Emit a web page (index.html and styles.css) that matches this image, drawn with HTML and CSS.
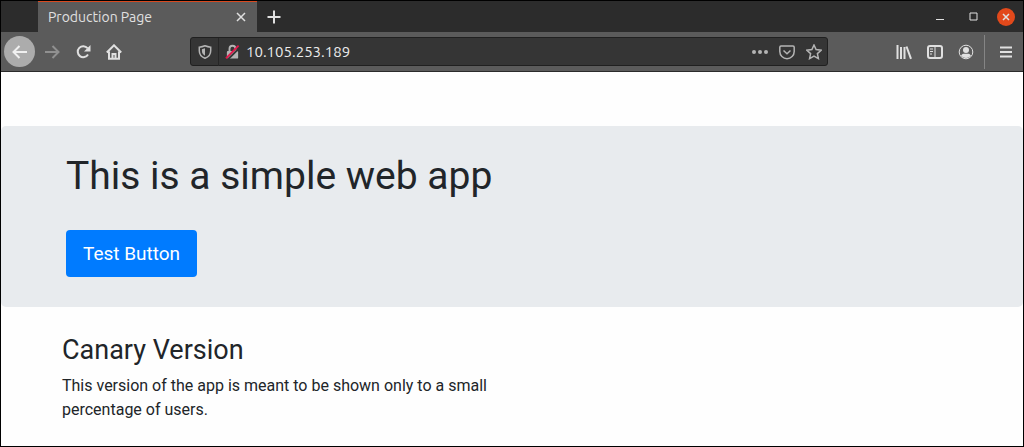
FILE: index.html
```html
<!DOCTYPE html>
<html lang="en">
<head>
  <meta charset="UTF-8">
  <meta name="viewport" content="width=device-width, initial-scale=1.0">
  <title>Production Page</title>
  <link rel="stylesheet" href="styles.css">
</head>
<body>

<div class="browser">
  <header>
    <div class="titlebar">
      <div class="tab">
        <span class="tab-title">Production Page</span>
        <button class="tab-close" aria-label="Close tab">
          <svg width="10" height="10" viewBox="0 0 10 10"><path d="M1 1l8 8M9 1l-8 8"/></svg>
        </button>
      </div>
      <button class="new-tab" aria-label="New tab">
        <svg width="14" height="14" viewBox="0 0 14 14"><path d="M7 0.500v13M0.500 7h13"/></svg>
      </button>
      <div class="window-controls">
        <button aria-label="Minimize">
          <svg width="8" height="8" viewBox="0 0 8 8"><path d="M0 6.500h8"/></svg>
        </button>
        <button aria-label="Maximize">
          <svg width="9" height="9" viewBox="0 0 9 9"><path d="M1 1h7v7H1z"/></svg>
        </button>
        <button class="window-close" aria-label="Close window">
          <svg width="8" height="8" viewBox="0 0 8 8"><path d="M1 1l6 6M7 1l-6 6"/></svg>
        </button>
      </div>
    </div>

    <div class="toolbar">
      <nav class="nav-buttons">
        <button class="back" aria-label="Back">
          <svg width="16" height="16" viewBox="0 0 16 16"><path d="M15 8H1.500M7.500 2l-6 6 6 6"/></svg>
        </button>
        <button class="forward" aria-label="Forward" disabled>
          <svg width="16" height="16" viewBox="0 0 16 16"><path d="M1 8h13.500M8.500 2l6 6-6 6"/></svg>
        </button>
        <button aria-label="Reload">
          <svg width="16" height="16" viewBox="0 0 16 16"><path d="M12.500 4.200A5.500 5.500 0 1 0 13 10.500"/><path class="solid" d="M15.500 1v6.500H9z"/></svg>
        </button>
        <button aria-label="Home">
          <svg width="16" height="16" viewBox="0 0 16 16"><path d="M0.800 8.500L8 1.300l7.200 7.200M3 7.500v7.300h10V7.500"/><path d="M6.500 15v-5h3v5"/></svg>
        </button>
      </nav>

      <form class="urlbar">
        <svg class="shield" width="14" height="14" viewBox="0 0 14 14"><path d="M7 0.800C5 1.600 3.200 2 1.300 2.200v3.600c0 3.700 2.200 6.200 5.700 7.500 3.500-1.300 5.700-3.800 5.700-7.500V2.200C10.800 2 9 1.600 7 0.800z"/><path class="solid" d="M7 3.300C6 3.800 5 4.100 3.900 4.300v1.800c0 2.200 1.100 3.700 3.100 4.600z"/></svg>
        <svg class="lock" width="16" height="16" viewBox="0 0 16 16"><path d="M4.800 7V4.500a3.200 3.200 0 0 1 6.400 0V7"/><rect class="solid" x="2" y="7" width="12" height="8" rx="1"/><path class="gap" d="M3 16L16 3"/><path class="slash" d="M1 14.800L14.500 1.200"/></svg>
        <input type="text" aria-label="Address" value="10.105.253.189">
        <button type="button" aria-label="Page actions">
          <svg width="16" height="16" viewBox="0 0 16 16"><circle class="solid" cx="2" cy="8" r="2"/><circle class="solid" cx="8" cy="8" r="2"/><circle class="solid" cx="14" cy="8" r="2"/></svg>
        </button>
        <button type="button" aria-label="Save to Pocket">
          <svg width="16" height="16" viewBox="0 0 16 16"><path d="M2 2h12a1.200 1.200 0 0 1 1.200 1.200V7.500a7.200 7.200 0 0 1-14.400 0V3.200A1.200 1.200 0 0 1 2 2z"/><path d="M4.500 6.500L8 9.800l3.500-3.300"/></svg>
        </button>
        <button type="button" aria-label="Bookmark this page">
          <svg width="16" height="16" viewBox="0 0 16 16"><path d="M8 1l2.100 4.600 5 0.600-3.700 3.400 1 5L8 12.100l-4.400 2.500 1-5L0.900 6.200l5-0.600z"/></svg>
        </button>
      </form>

      <div class="tools">
        <button aria-label="Library">
          <svg width="16" height="16" viewBox="0 0 16 16"><path d="M1.500 1v14M5 3v12M8.500 3v12M10.500 2.500L15 14.800"/></svg>
        </button>
        <button aria-label="Sidebars">
          <svg width="16" height="16" viewBox="0 0 16 16"><rect x="1" y="2" width="14" height="12" rx="2"/><path class="thin" d="M8 2v12M3 5h3M3 7.500h3M3 10h2"/></svg>
        </button>
        <button aria-label="Account">
          <svg width="16" height="16" viewBox="0 0 16 16"><circle class="thin" cx="8" cy="8" r="6.800"/><circle class="solid" cx="8" cy="6" r="3"/><path class="solid" d="M3 11.500c1-1.500 2.200-1.800 3-1.800h4c0.800 0 2 0.300 3 1.800-1.200 1.700-3 2.500-5 2.500s-3.800-0.800-5-2.500z"/></svg>
        </button>
        <button class="menu" aria-label="Open menu">
          <svg width="14" height="14" viewBox="0 0 14 14"><path d="M1 2.500h12M1 7h12M1 11.500h12"/></svg>
        </button>
      </div>
    </div>
  </header>

  <main>
    <section class="jumbotron">
      <h1>This is a simple web app</h1>
      <button class="btn">Test Button</button>
    </section>

    <section class="version">
      <h2>Canary Version</h2>
      <p>This version of the app is meant to be shown only to a small percentage of users.</p>
    </section>
  </main>
</div>

</body>
</html>
```
FILE: styles.css
```css
* {
  box-sizing: border-box;
}
body {
  margin: 0;
  background: #fefefe;
  color: #212529;
  font-family: Roboto, sans-serif;
  font-size: 16px;
  line-height: 24px;
}
.browser {
  min-height: 100vh;
  border: 1px solid #000;
}
header {
  font-family: Ubuntu, "Noto Sans", sans-serif;
  font-size: 14px;
  color: #e0e0e0;
}
header button {
  display: flex;
  align-items: center;
  justify-content: center;
  padding: 0;
  border: none;
  background: none;
  color: inherit;
}
header svg {
  display: block;
  flex: none;
  fill: none;
  stroke: currentColor;
  stroke-width: 2;
}
header svg .solid {
  fill: currentColor;
  stroke: none;
}
header svg .thin {
  stroke-width: 1;
}

/* title bar */
.titlebar {
  display: flex;
  height: 31px;
  padding-left: 37px;
  background: #2c2c2c;
}
.tab {
  display: flex;
  align-items: center;
  justify-content: space-between;
  width: 219px;
  padding: 0 11px 0 10px;
  border-top: 1px solid #d9491f;
  background: #5b5b5b;
}
.tab-close svg {
  stroke-width: 1.5;
}
.new-tab {
  width: 34px;
}
.window-controls {
  display: flex;
  align-items: center;
  gap: 15px;
  margin-left: auto;
  padding-right: 8px;
}
.window-controls button {
  width: 18px;
  height: 18px;
}
.window-controls svg {
  stroke-width: 1;
}
.window-controls .window-close {
  border-radius: 50%;
  background: #e2491b;
}
.window-close svg {
  stroke-width: 1.5;
}

/* toolbar */
.toolbar {
  display: flex;
  align-items: center;
  height: 40px;
  padding-left: 3px;
  border-bottom: 1px solid #2b2b2b;
  background: #5b5b5b;
}
.nav-buttons {
  display: flex;
  align-items: center;
}
.nav-buttons button {
  width: 31px;
  height: 31px;
}
.nav-buttons .back {
  margin-right: 1px;
  border-radius: 50%;
  background: #acacac;
  color: #f0f0f0;
}
.nav-buttons .forward {
  color: #909090;
}
.urlbar {
  display: flex;
  align-items: center;
  flex: 1;
  height: 29px;
  margin: 0 60px 0 61px;
  padding-left: 7px;
  border: 1px solid #202020;
  border-radius: 3px;
  background: #353535;
  color: #b4b4b4;
}
.urlbar .shield {
  stroke-width: 1.5;
}
.urlbar .lock {
  width: 28px;
  height: 28px;
  margin-left: 6px;
  padding: 6px;
  border-left: 1px solid #262626;
}
.lock .gap {
  stroke: #353535;
}
.lock .slash {
  stroke: #e3164a;
}
.urlbar input {
  flex: 1;
  min-width: 0;
  padding: 0;
  border: none;
  background: none;
  color: #ececec;
  font: inherit;
  font-size: 15px;
}
.urlbar button {
  width: 27px;
  height: 27px;
}
.urlbar button svg {
  stroke-width: 1.5;
}
.tools {
  display: flex;
  align-items: center;
}
.tools button {
  width: 31px;
  height: 34px;
}
.tools .menu {
  width: 39px;
  margin-left: 3px;
  padding-left: 3px;
  border-left: 1px solid #858585;
}

/* page */
.jumbotron {
  margin-top: 54px;
  padding: 26px 65px 30px;
  border-radius: 5px;
  background: #e8ebee;
}
h1, h2 {
  margin: 0;
  font-weight: 400;
}
h1 {
  margin-bottom: 30px;
  font-size: 39px;
  line-height: 48px;
}
.btn {
  padding: 8px 17px;
  border: none;
  border-radius: 4px;
  background: #007bff;
  color: #fff;
  font-family: inherit;
  font-size: 19px;
  line-height: 31px;
  vertical-align: top;
}
.version {
  width: 50%;
  padding: 26px 15px 24px 61px;
}
h2 {
  margin-bottom: 7px;
  font-size: 27px;
  line-height: 34px;
}
p {
  margin: 0;
}
```
